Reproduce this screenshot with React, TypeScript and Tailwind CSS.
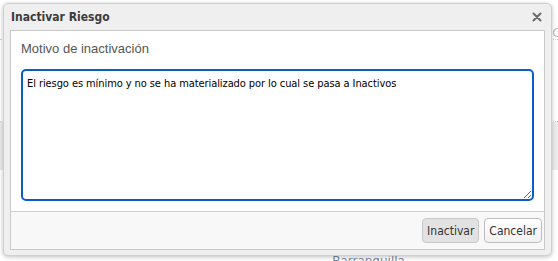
import React from 'react';

const condensed = "[font-family:'DejaVu_Sans_Condensed','DejaVu_Sans',sans-serif] font-stretch-condensed";

export default function App() {
  return (
    <div className="relative w-[558px] h-[261px] overflow-hidden bg-white">
      {/* page behind the modal */}
      <div className="absolute inset-0">
        <div className="h-[40px] border-b border-dotted border-[#cfcfcf]" />
        <div className="h-[82px] border-b border-dotted border-[#d8d8d8]" />
        <div className="h-[48px] bg-[#ececec]" />
        <div className="absolute left-[324px] top-[252px] text-[12px] text-[#7a8aa3] [font-family:'DejaVu_Sans',sans-serif]">
          - Barranquilla
        </div>
        <div className="absolute right-[-4px] top-[28px] w-[9px] h-[9px] rounded-full border border-[#aaa]" />
      </div>

      {/* modal */}
      <div className="absolute left-[3px] top-[3px] w-[549px] h-[253px] rounded-[5px] border border-[#cfcfcf] bg-[#efefef] shadow-[0_1px_4px_rgba(0,0,0,0.25)] flex flex-col pb-[5px] px-[6px]">
        <div className="h-[28px] flex items-center justify-between pl-[1px] pr-[1px]">
          <span className={`text-[12px] font-bold text-[#3c3c3c] ${condensed}`}>Inactivar Riesgo</span>
          <svg width="10" height="10" viewBox="0 0 10 10" className="mr-[2px]">
            <path d="M1.5 1.5 L8.5 8.5 M8.5 1.5 L1.5 8.5" stroke="#6b6b6b" strokeWidth="2" strokeLinecap="round" />
          </svg>
        </div>
        <div className="flex-1 flex flex-col border border-[#c9c9c9] bg-white">
          <div className="flex-1 px-[10px] pt-[9px] flex flex-col">
            <div className="text-[13px] text-[#555] leading-[18px] [font-family:'Liberation_Sans',Arial,sans-serif]">
              Motivo de inactivación
            </div>
            <textarea
              defaultValue="El riesgo es mínimo y no se ha materializado por lo cual se pasa a Inactivos"
              className={`mt-[11px] h-[132px] w-full rounded-[5px] border-2 border-[#0a5ccc] pl-[4px] pr-[4px] pt-[6px] pb-[4px] text-[11px] leading-[14px] tracking-[-0.08px] text-black outline-none ${condensed}`}
            />
          </div>
          <div className="h-[38px] mt-[10px] border-t border-[#cfcfcf] bg-[#f8f8f8] flex items-center justify-end gap-[5px] pr-[2px]">
            <button className={`h-[25px] px-[4px] rounded-[4px] border border-[#c8c8c8] bg-[#e2e2e2] text-[12px] text-[#333] ${condensed}`}>
              Inactivar
            </button>
            <button className={`h-[25px] px-[4px] rounded-[4px] border border-[#bdbdbd] bg-gradient-to-b from-white to-[#f1f1f1] text-[12px] text-[#333] ${condensed}`}>
              Cancelar
            </button>
          </div>
        </div>
      </div>
    </div>
  );
}
